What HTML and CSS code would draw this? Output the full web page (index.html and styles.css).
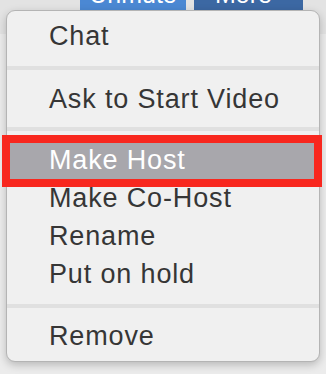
FILE: index.html
```html
<!DOCTYPE html>
<html lang="en">
<head>
    <meta charset="UTF-8">
    <title>Participant Menu</title>
    <link rel="stylesheet" href="styles.css">
</head>
<body>
    <div class="screen">
        <div class="toolbar">
            <span class="btn unmute">Unmute</span>
            <span class="btn more">More</span>
        </div>

        <div class="menu">
            <div class="section first">
                <div class="item">Chat</div>
            </div>
            <div class="section second">
                <div class="item">Ask to Start Video</div>
            </div>
            <div class="section third">
                <div class="item active">Make Host</div>
                <div class="item">Make Co-Host</div>
                <div class="item">Rename</div>
                <div class="item">Put on hold</div>
            </div>
            <div class="section last">
                <div class="item">Remove</div>
            </div>
        </div>

        <div class="callout"></div>
    </div>
</body>
</html>
```

FILE: styles.css
```css
body {
    margin: 0;
    background-color: #ececec;
    font-family: "Liberation Sans", Arial, sans-serif;
}
.screen {
    position: relative;
    width: 326px;
    height: 374px;
    overflow: hidden;
}
.toolbar {
    display: flex;
    gap: 8px;
    height: 60px;
    margin-top: -26px;
    padding-left: 80px;
    background-color: #e3e3e3;
}
.btn {
    height: 40px;
    line-height: 40px;
    font-size: 25px;
    color: white;
    text-align: center;
}
.unmute {
    width: 106px;
    background-color: #4b88d3;
}
.more {
    width: 99px;
    padding-right: 10px;
    background-color: #3c68a3;
}
.menu {
    position: absolute;
    top: 10px;
    left: 6px;
    width: 314px;
    height: 352px;
    box-sizing: border-box;
    background-color: #f0f0f0;
    border: 1px solid #b4b4b4;
    border-radius: 9px;
    box-shadow: 0 3px 8px rgba(0,0,0,0.22);
}
.section {
    border-bottom: 4px solid #e0e0e0;
}
.section.first {
    padding: 6px 0 11px;
}
.section.second {
    padding: 10px 0 9px;
}
.section.third {
    padding: 10px 0 11px;
}
.section.last {
    padding: 9px 0 0;
    border-bottom: none;
}
.item {
    height: 38px;
    line-height: 38px;
    padding-left: 42px;
    font-size: 27px;
    letter-spacing: 0.85px;
    color: #363636;
}
.item.active {
    background-color: #a8a7ac;
    color: white;
}
.callout {
    position: absolute;
    top: 135px;
    left: 2px;
    width: 320px;
    height: 52px;
    box-sizing: border-box;
    border: 8px solid #f8271e;
}
```
